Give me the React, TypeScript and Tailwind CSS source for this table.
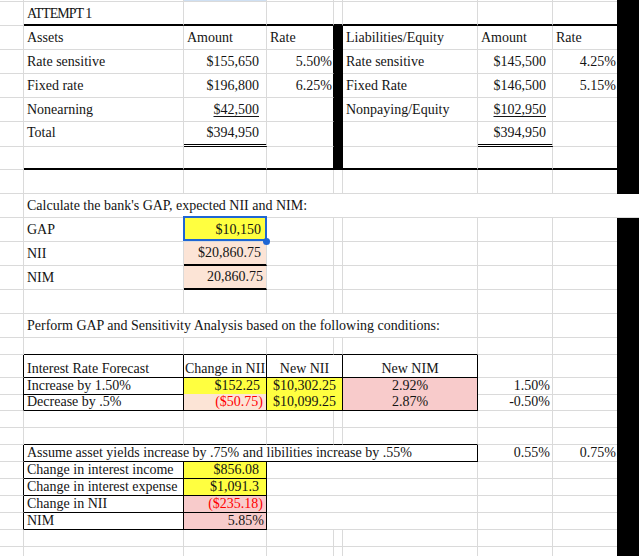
import React, { createContext, useContext } from "react";

const PB = createContext("pb-[3px]");
const GR = "border-r border-r-[#dadada]";
const GB = "border-b border-b-[#dadada]";
const BR = "border-r border-r-black";
const BB = "border-b border-b-black";
const TB = "border-b-2 border-b-black";
const DB = "border-b-[3px] border-double border-b-black";

type CP = { r?: string; b?: string; cls?: string; children?: React.ReactNode; pb?: string };

function C({ r = GR, b = GB, cls = "", children, pb }: CP) {
  const rowPb = useContext(PB);
  return (
    <div className={`relative flex items-end whitespace-nowrap min-w-0 ${r} ${b} ${pb ?? rowPb} ${cls}`}>
      {children}
    </div>
  );
}

function Row({ h, pb = "pb-[3px]", children }: { h: string; pb?: string; children: React.ReactNode }) {
  return (
    <PB.Provider value={pb}>
      <div className={`grid grid-cols-[24px_160px_83px_67px_9px_135px_75px_64px_22px] ${h}`}>{children}</div>
    </PB.Provider>
  );
}

const Blk = () => <C r="" b="" cls="bg-black" />;
const L = "justify-start pl-[3px]";
const YEL = "bg-[#ffff40]";
const PEA = "bg-[#fce4d6]";
const PNK = "bg-[#f8cbcb]";

function Plain({ h, pb }: { h: string; pb?: string }) {
  return (
    <Row h={h} pb={pb}>
      <C />
      <C />
      <C />
      <C />
      <C />
      <C />
      <C />
      <C r="" />
      <Blk />
    </Row>
  );
}

function AssetRow({
  a,
  b,
  c,
  f,
  g,
  hh,
  last,
  under,
}: {
  a: string;
  b?: string;
  c?: string;
  f?: string;
  g?: string;
  hh?: string;
  last?: boolean;
  under?: boolean;
}) {
  const h = last ? "h-[25px]" : "h-[24px]";
  return (
    <Row h={h} pb={last ? "pb-[5px]" : "pb-[3px]"}>
      <C />
      <C cls={L}>{a}</C>
      <C cls="justify-end pr-[7px]" b={last ? DB : GB} pb={last ? "pb-[3px]" : undefined}>
        <span className={under ? "underline underline-offset-[2px] decoration-1" : ""}>{b}</span>
      </C>
      <C r={BR} cls="justify-end pr-[1px]">
        {c}
      </C>
      <C r="" b="" cls="bg-black" />
      <C cls={L}>{f}</C>
      <C cls="justify-end pr-[6px]" b={last ? DB : GB} pb={last ? "pb-[3px]" : undefined}>
        <span className={under ? "underline underline-offset-[2px] decoration-1" : ""}>{g}</span>
      </C>
      <C r="" cls="justify-end pr-[1px]">
        {hh}
      </C>
      <Blk />
    </Row>
  );
}

export default function App() {
  return (
    <div className="w-[639px] h-[556px] overflow-hidden bg-white font-['Liberation_Serif',serif] text-[14px] leading-[16px] text-[#141414]">
      {/* column header sliver */}
      <Row h="h-[2px]" pb="pb-0">
        <C />
        <C />
        <C cls="bg-[#cfe0f3]" />
        <C />
        <C />
        <C />
        <C />
        <C r="" />
        <Blk />
      </Row>
      {/* ATTEMPT 1 */}
      <Row h="h-[24px]" pb="pb-[2px]">
        <C />
        <C b={TB} cls={L}>
          <span className="tracking-[-1px]">ATTEMPT 1</span>
        </C>
        <C b={TB} />
        <C b={TB} />
        <C b={TB} />
        <C b={TB} />
        <C b={TB} />
        <C r="" b={TB} />
        <Blk />
      </Row>
      {/* header */}
      <Row h="h-[24px]">
        <C />
        <C cls={L}>Assets</C>
        <C cls={L}>Amount</C>
        <C r={BR} cls={L}>
          Rate
        </C>
        <C r="" b="" cls="bg-black" />
        <C cls={L}>Liabilities/Equity</C>
        <C cls={L}>Amount</C>
        <C r="" cls={L}>
          Rate
        </C>
        <Blk />
      </Row>
      <AssetRow a="Rate sensitive" b="$155,650" c="5.50%" f="Rate sensitive" g="$145,500" hh="4.25%" />
      <AssetRow a="Fixed  rate" b="$196,800" c="6.25%" f="Fixed Rate" g="$146,500" hh="5.15%" />
      <AssetRow a="Nonearning" b="$42,500" f="Nonpaying/Equity" g="$102,950" under />
      <AssetRow a="Total" b="$394,950" g="$394,950" last />
      {/* empty row with thick bottom */}
      <Row h="h-[23px]">
        <C />
        <C b={TB} />
        <C b={TB} />
        <C r={BR} b={TB} />
        <C r="" b="" cls="bg-black" />
        <C b={TB} />
        <C b={TB} />
        <C r="" b={TB} />
        <Blk />
      </Row>
      <Plain h="h-[24px]" />
      {/* Calculate */}
      <Row h="h-[24px]">
        <C />
        <C r="" cls={`col-span-8 ${L}`}>
          Calculate the bank&apos;s GAP, expected NII and NIM:
        </C>
      </Row>
      {/* GAP */}
      <Row h="h-[24px]">
        <C />
        <C cls={L}>GAP</C>
        <C cls={`justify-end pr-[5px] ${YEL}`}>
          $10,150
          <div className="absolute left-[-1px] top-[-2px] right-[-1px] bottom-0 border-2 border-[#1f66d4] z-10 pointer-events-none" />
          <div className="absolute right-[-4px] bottom-[-4px] w-[7px] h-[7px] rounded-full bg-[#1f66d4] z-10" />
        </C>
        <C />
        <C />
        <C />
        <C />
        <C r="" />
        <Blk />
      </Row>
      {/* NII */}
      <Row h="h-[24px]">
        <C />
        <C cls={L}>NII</C>
        <C b={TB} cls={`justify-end pr-[5px] ${PEA}`}>
          $20,860.75
        </C>
        <C />
        <C />
        <C />
        <C />
        <C r="" />
        <Blk />
      </Row>
      {/* NIM */}
      <Row h="h-[24px]">
        <C />
        <C cls={L}>NIM</C>
        <C b={TB} cls={`justify-end pr-[3px] ${PEA}`}>
          20,860.75
        </C>
        <C />
        <C />
        <C />
        <C />
        <C r="" />
        <Blk />
      </Row>
      <Plain h="h-[24px]" />
      {/* Perform */}
      <Row h="h-[24px]">
        <C />
        <C cls={`col-span-5 ${L}`}>Perform GAP and Sensitivity Analysis based on the following conditions:</C>
        <C />
        <C r="" />
        <Blk />
      </Row>
      {/* spacer above table 1 */}
      <Row h="h-[17px]" pb="pb-0">
        <C r="border-r border-r-[#dadada]" />
        <C b={BB} />
        <C b={BB} />
        <C b={BB} />
        <C b={BB} />
        <C b={BB} />
        <C />
        <C r="" />
        <Blk />
      </Row>
      {/* table 1 header */}
      <Row h="h-[23px]" pb="pb-0">
        <C r={BR} />
        <C r={BR} b={BB} cls={L}>
          Interest Rate Forecast
        </C>
        <C r={BR} b={BB} cls="justify-center">
          Change in NII
        </C>
        <C r={BR} b={BB} cls="col-span-2 justify-center">
          New NII
        </C>
        <C r={BR} b={BB} cls="justify-center">
          New NIM
        </C>
        <C />
        <C r="" />
        <Blk />
      </Row>
      <Row h="h-[16px]" pb="pb-0">
        <C r={BR} />
        <C r={BR} b={BB} cls={L}>
          Increase by 1.50%
        </C>
        <C r={BR} b={BB} cls={`justify-end pr-[6px] ${YEL}`}>
          $152.25
        </C>
        <C r={BR} b={BB} cls={`col-span-2 justify-center ${YEL}`}>
          $10,302.25
        </C>
        <C r={BR} b={BB} cls={`justify-center ${PNK}`}>
          2.92%
        </C>
        <C cls="justify-end pr-[2px]">1.50%</C>
        <C r="" />
        <Blk />
      </Row>
      <Row h="h-[17px]" pb="pb-0">
        <C r={BR} />
        <C r={BR} b={BB} cls={L}>
          Decrease by .5%
        </C>
        <C r={BR} b={BB} cls={`justify-end pr-[3px] text-[#ff0000] ${PEA}`}>
          ($50.75)
        </C>
        <C r={BR} b={BB} cls={`col-span-2 justify-center ${YEL}`}>
          $10,099.25
        </C>
        <C r={BR} b={BB} cls={`justify-center ${PNK}`}>
          2.87%
        </C>
        <C cls="justify-end pr-[2px]">-0.50%</C>
        <C r="" />
        <Blk />
      </Row>
      <Plain h="h-[17px]" pb="pb-0" />
      {/* spacer above table 2 */}
      <Row h="h-[17px]" pb="pb-0">
        <C />
        <C b={BB} />
        <C b={BB} />
        <C b={BB} />
        <C b={BB} />
        <C b={BB} />
        <C />
        <C r="" />
        <Blk />
      </Row>
      {/* table 2 */}
      <Row h="h-[17px]" pb="pb-0">
        <C r={BR} />
        <C r={BR} b={BB} cls={`col-span-5 ${L}`}>
          Assume asset yields increase by .75% and libilities increase by .55%
        </C>
        <C cls="justify-end pr-[2px]">0.55%</C>
        <C r="" cls="justify-end pr-[1px]">
          0.75%
        </C>
        <Blk />
      </Row>
      {(
        [
          ["Change in interest income", "$856.08", YEL, "pr-[7px]", ""],
          ["Change in interest expense", "$1,091.3", YEL, "pr-[7px]", ""],
          ["Change in NII", "($235.18)", PNK, "pr-[3px]", "text-[#ff0000]"],
          ["NIM", "5.85%", PNK, "pr-[2px]", ""],
        ] as const
      ).map(([lab, val, bg, pr, tc]) => (
        <Row key={lab} h="h-[17px]" pb="pb-0">
          <C r={BR} />
          <C r={BR} b={BB} cls={L}>
            {lab}
          </C>
          <C r={BR} b={BB} cls={`justify-end ${pr} ${bg} ${tc}`}>
            {val}
          </C>
          <C r="" />
          <C r="" />
          <C />
          <C />
          <C r="" />
          <Blk />
        </Row>
      ))}
      <Plain h="h-[17px]" pb="pb-0" />
      <Row h="h-[9px]" pb="pb-0">
        <C b="" />
        <C b="" />
        <C b="" />
        <C b="" />
        <C b="" />
        <C b="" />
        <C b="" />
        <C r="" b="" />
        <Blk />
      </Row>
    </div>
  );
}
